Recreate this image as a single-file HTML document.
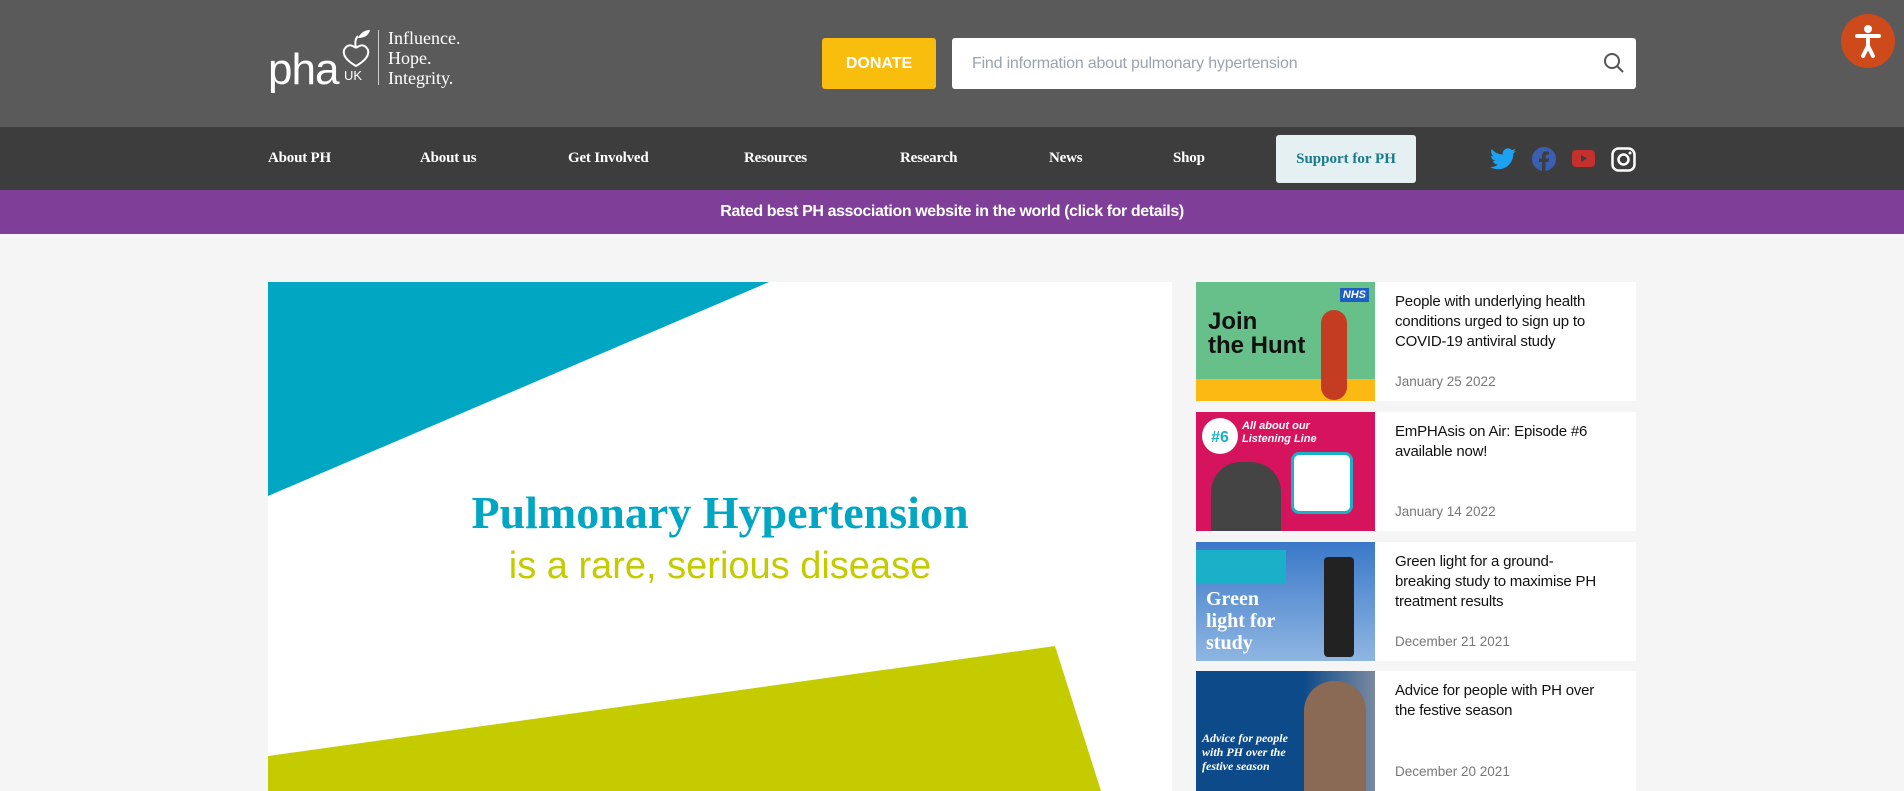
<!DOCTYPE html>
<html><head><meta charset="utf-8"><style>
*{margin:0;padding:0;box-sizing:border-box}
body{width:1904px;height:791px;overflow:hidden;background:#f5f5f5;font-family:"Liberation Sans",sans-serif;position:relative}
.abs{position:absolute}
.top{left:0;top:0;width:1904px;height:127px;background:#5a5a5a}
.nav{left:0;top:127px;width:1904px;height:63px;background:#3d3d3d}
.purple{left:0;top:190px;width:1904px;height:44px;background:#7f3f98;color:#fff;font-weight:bold;font-size:16px;text-align:center;line-height:44px;letter-spacing:-0.4px}
.nav a{position:absolute;top:150px;color:#fff;font-family:"Liberation Serif",serif;font-weight:bold;font-size:15px;text-decoration:none;letter-spacing:-0.2px}
.card{position:absolute;left:1196px;width:440px;height:119px;background:#fff}
.card .img{position:absolute;left:0;top:0;width:179px;height:100%;overflow:hidden}
.card .t{position:absolute;left:199px;top:10px;width:212px;font-size:15px;line-height:20px;color:#111;letter-spacing:-0.2px}
.card .d{position:absolute;left:199px;bottom:12px;font-size:13.5px;color:#777}
</style></head><body>
<div class="abs top"></div>
<div class="abs" style="left:268px;top:50px;color:#fff;font-size:44px;font-family:'Liberation Sans',sans-serif;line-height:40px;letter-spacing:-1px;font-weight:300">pha</div>
<svg class="abs" style="left:340px;top:30px" width="40" height="40" viewBox="0 0 40 40"><path d="M16 18 Q8 12 4 20 Q2 28 16 36 Q30 28 28 20 Q24 12 16 18" fill="none" stroke="#fff" stroke-width="2"/><path d="M16 18 Q14 10 18 6" stroke="#fff" stroke-width="2" fill="none"/><path d="M18 8 Q22 0 30 0 Q28 8 18 8Z" fill="#fff"/></svg>
<div class="abs" style="left:344px;top:68px;color:#fff;font-size:13px">UK</div>
<div class="abs" style="left:378px;top:30px;width:1px;height:55px;background:#ccc"></div>
<div class="abs" style="left:388px;top:28px;color:#fff;font-family:'Liberation Serif',serif;font-size:18px;line-height:20px">Influence.<br>Hope.<br>Integrity.</div>
<div class="abs" style="left:822px;top:38px;width:114px;height:51px;background:#f9bd0e;border-radius:3px;color:#fff;font-weight:bold;font-size:16px;text-align:center;line-height:51px">DONATE</div>
<div class="abs" style="left:952px;top:38px;width:684px;height:51px;background:#fff;border-radius:3px;color:#9aa3b0;font-size:16px;line-height:51px;padding-left:20px;letter-spacing:-0.2px">Find information about pulmonary hypertension</div>
<svg class="abs" style="left:1603px;top:52px" width="22" height="22" viewBox="0 0 22 22"><circle cx="9" cy="9" r="7" fill="none" stroke="#555" stroke-width="2"/><path d="M14 14 L20 20" stroke="#555" stroke-width="2"/></svg>
<svg class="abs" style="left:1841px;top:14px" width="54" height="54" viewBox="0 0 54 54"><circle cx="27" cy="27" r="27" fill="#cf4a1b"/><circle cx="27" cy="15" r="4" fill="#fff"/><path d="M16 22 L38 22 M27 22 L27 32 L22 42 M27 32 L32 42" stroke="#fff" stroke-width="4" stroke-linecap="round" fill="none"/></svg>
<div class="abs nav"></div>
<div class="nav">
<a style="left:268px">About PH</a><a style="left:420px">About us</a><a style="left:568px">Get Involved</a><a style="left:744px">Resources</a><a style="left:900px">Research</a><a style="left:1049px">News</a><a style="left:1173px">Shop</a>
</div>
<div class="abs" style="left:1276px;top:135px;width:140px;height:48px;background:#e5f0f2;border-radius:3px;color:#1a7a8c;font-family:'Liberation Serif',serif;font-weight:bold;font-size:15px;text-align:center;line-height:48px">Support for PH</div>
<svg class="abs" style="left:1490px;top:148px" width="26" height="22" viewBox="0 0 24 20"><path d="M24 2.4a10 10 0 0 1-2.8.8A5 5 0 0 0 23.3.5a10 10 0 0 1-3.1 1.2A4.9 4.9 0 0 0 11.8 6 14 14 0 0 1 1.7.9a4.9 4.9 0 0 0 1.5 6.6A4.9 4.9 0 0 1 1 6.9a4.9 4.9 0 0 0 3.9 4.8 5 5 0 0 1-2.2.1 4.9 4.9 0 0 0 4.6 3.4A9.9 9.9 0 0 1 0 17.3 14 14 0 0 0 7.5 19.5c9 0 14-7.5 14-14v-.6A10 10 0 0 0 24 2.4z" fill="#1da1f2"/></svg>
<svg class="abs" style="left:1532px;top:147px" width="24" height="24" viewBox="0 0 24 24"><circle cx="12" cy="12" r="12" fill="#3b5fb0"/><path d="M13.5 24V15h3l.5-3.5h-3.5V9.3c0-1 .3-1.7 1.7-1.7H17V4.5c-.3 0-1.4-.1-2.6-.1-2.6 0-4.4 1.6-4.4 4.5v2.6H7V15h3v9z" fill="#3d3d3d"/></svg>
<svg class="abs" style="left:1572px;top:150px" width="23" height="18" viewBox="0 0 23 18"><rect width="23" height="17" rx="4" fill="#c4302b"/><path d="M9 5 L15 8.5 L9 12Z" fill="#3d3d3d"/></svg>
<svg class="abs" style="left:1611px;top:147px" width="25" height="25" viewBox="0 0 25 25"><rect x="1.5" y="1.5" width="22" height="22" rx="6" fill="none" stroke="#fff" stroke-width="2.5"/><circle cx="12.5" cy="12.5" r="5" fill="none" stroke="#fff" stroke-width="2.5"/><circle cx="19" cy="6" r="1.5" fill="#fff"/></svg>
<div class="abs purple">Rated best PH association website in the world (click for details)</div>
<div class="abs" style="left:268px;top:282px;width:904px;height:509px;background:#fff;overflow:hidden">
<svg width="904" height="509" style="position:absolute;left:0;top:0"><polygon points="0,0 501,0 0,214" fill="#00a6c2"/><polygon points="0,474 787,364 833,509 0,509" fill="#c4cc00"/></svg>
<div style="position:absolute;left:0;width:904px;top:204px;text-align:center;color:#00a6c2;font-family:'Liberation Serif',serif;font-weight:bold;font-size:46px;line-height:54px">Pulmonary Hypertension</div>
<div style="position:absolute;left:0;width:904px;top:261px;text-align:center;color:#c4cc00;font-size:38px;line-height:46px">is a rare, serious disease</div>
</div>
<div class="card" style="top:282px"><div class="img" style="background:#67c08a"><div style="position:absolute;left:0;bottom:0;width:179px;height:22px;background:#fdb913"></div><div style="position:absolute;left:12px;top:28px;font-weight:bold;font-size:24px;line-height:24px;color:#111">Join<br>the Hunt</div><div style="position:absolute;left:125px;top:28px;width:26px;height:90px;border-radius:13px;background:#c43d22"></div><div style="position:absolute;right:6px;top:6px;background:#1f5fbf;color:#fff;font-weight:bold;font-style:italic;font-size:11px;padding:1px 3px">NHS</div></div><div class="t">People with underlying health conditions urged to sign up to COVID-19 antiviral study</div><div class="d">January 25 2022</div></div>
<div class="card" style="top:412px"><div class="img" style="background:#d6145e"><div style="position:absolute;left:6px;top:6px;width:36px;height:36px;border-radius:50%;background:#fff;color:#1ab0c8;font-weight:bold;font-size:16px;text-align:center;line-height:40px">#6</div><div style="position:absolute;left:46px;top:8px;color:#fff;font-style:italic;font-weight:bold;font-size:11px;line-height:13px">All about our<br>Listening Line</div><div style="position:absolute;left:15px;top:50px;width:70px;height:69px;background:#444;border-radius:30px 30px 0 0"></div><div style="position:absolute;left:95px;top:40px;width:62px;height:62px;background:#fff;border:3px solid #1ab0c8;border-radius:8px"></div></div><div class="t">EmPHAsis on Air: Episode #6 available now!</div><div class="d">January 14 2022</div></div>
<div class="card" style="top:542px"><div class="img" style="background:linear-gradient(#3a78c8,#8fb6e2)"><div style="position:absolute;left:0;top:8px;width:90px;height:34px;background:#1ab0c8"></div><div style="position:absolute;left:10px;top:46px;color:#fff;font-family:'Liberation Serif',serif;font-weight:bold;font-size:20px;line-height:22px">Green<br>light for<br>study</div><div style="position:absolute;left:128px;top:15px;width:30px;height:100px;background:#222;border-radius:4px"></div></div><div class="t">Green light for a ground-<br>breaking study to maximise PH treatment results</div><div class="d">December 21 2021</div></div>
<div class="card" style="top:671px;height:120px"><div class="img" style="background:linear-gradient(90deg,#0d4a8a 60%,#7a8aa0)"><div style="position:absolute;left:6px;top:60px;color:#fff;font-style:italic;font-weight:bold;font-family:'Liberation Serif',serif;font-size:12px;line-height:14px">Advice for people<br>with PH over the<br>festive season</div><div style="position:absolute;left:108px;top:10px;width:62px;height:110px;background:#8a6a55;border-radius:30px 30px 0 0"></div></div><div class="t">Advice for people with PH over<br>the festive season</div><div class="d">December 20 2021</div></div>
</body></html>
